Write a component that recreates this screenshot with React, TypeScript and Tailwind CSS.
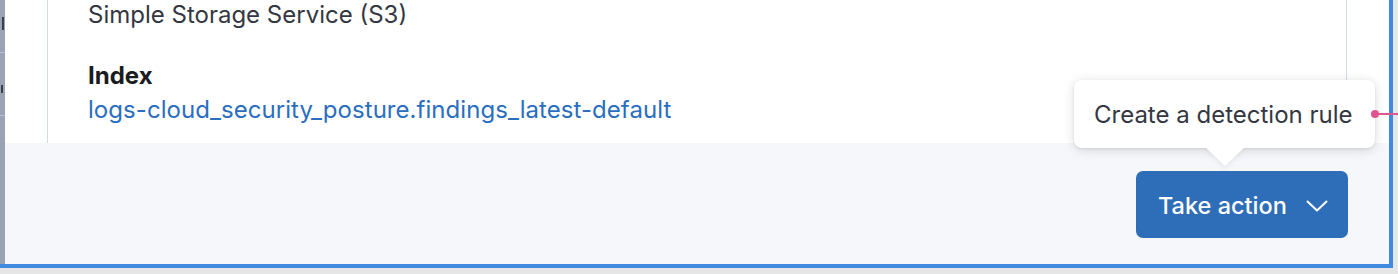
function TooltipBubble() {
  return (
    <div className="absolute left-[1074px] top-[80px] z-10">
      <div className="relative h-[68px] w-[301px] rounded-[8px] bg-white pl-[20px] text-[24px] leading-[70px] text-[#343741] shadow-[0_2px_12px_rgba(0,0,0,0.14),0_1px_3px_rgba(0,0,0,0.08)]">
        Create a detection rule
        <div className="absolute left-[130px] top-[66px] h-0 w-0 border-x-[21px] border-t-[20px] border-x-transparent border-t-white drop-shadow-[0_3px_2px_rgba(0,0,0,0.06)]" />
      </div>
    </div>
  );
}

export default function App() {
  return (
    <div className="relative h-[274px] w-[1398px] overflow-hidden bg-[#e6e6e6] font-['Inter','Noto_Sans',sans-serif]">
      <div className="flex h-[268px] w-[1393px] border-b-4 border-r-4 border-[#3f89e0]">
        {/* cut-off table behind the flyout */}
        <div className="flex w-[5px] flex-col bg-[#9aa2b4]">
          <div className="ml-[2px] mt-[17px] h-[13px] w-[2px] bg-[#3b3f48]" />
          <div className="mt-[22px] h-px w-full bg-[#b8bfcd]" />
          <div className="ml-[1px] mt-[32px] h-[8px] w-[2px] bg-[#3b3f48]" />
          <div className="mt-[22px] h-px w-full bg-[#b8bfcd]" />
        </div>

        <div className="flex flex-1 flex-col">
          <div className="flex-1 bg-white px-[42px]">
            <div className="h-full border-x border-[#d3dae6] pl-[40px] text-[24px] leading-[30px]">
              <div className="text-[#343741]">Simple Storage Service (S3)</div>
              <div className="mt-[31px] font-bold text-[#1a1c21]">Index</div>
              <div className="mt-[4px] tracking-[0.05px] text-[#2b6ebf]">logs-cloud_security_posture.findings_latest-default</div>
            </div>
          </div>

          <div className="flex h-[121px] items-start justify-end bg-[#f5f7fa] pr-[41px] pt-[28px]">
            <button className="flex h-[67px] w-[212px] items-center rounded-[7px] bg-[#2e6db8] pl-[22px] pt-[2px] text-[23.5px] font-medium text-white">
              Take action
              <svg className="ml-[19px]" width="22" height="12" viewBox="0 0 22 12" fill="none">
                <path d="M1.5 1.5 L11 10.5 L20.5 1.5" stroke="white" strokeWidth="2" strokeLinecap="round" strokeLinejoin="round" />
              </svg>
            </button>
          </div>
        </div>
      </div>

      <TooltipBubble />

      <div className="absolute left-[1371px] top-[110px] z-20 h-[8px] w-[8px] rounded-full bg-[#e0548f]" />
      <div className="absolute left-[1375px] top-[113px] z-20 h-[2px] w-[23px] bg-[#e0548f]" />
    </div>
  );
}
